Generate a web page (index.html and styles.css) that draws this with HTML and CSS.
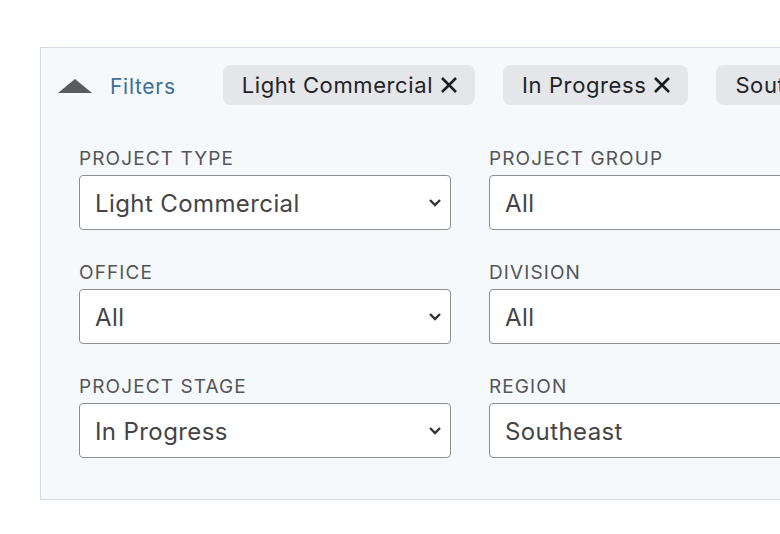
FILE: index.html
```html
<!DOCTYPE html>
<html lang="en">
<head>
<meta charset="utf-8">
<title>Filters</title>
<link rel="stylesheet" href="styles.css">
</head>
<body>
<div class="panel">
  <div class="header">
    <button class="toggle" type="button">
      <svg class="caret" width="34" height="14" viewBox="0 0 34 14"><polygon points="17,0 34,14 0,14" fill="#5b5b5c"/></svg>
      <span class="toggle-label">Filters</span>
    </button>
    <div class="chips">
      <span class="chip">Light Commercial <svg class="x" width="18" height="18" viewBox="0 0 18 18"><path d="M2 2 L16 16 M16 2 L2 16" stroke="#1c1c1e" stroke-width="2.6" stroke-linecap="butt"/></svg></span>
      <span class="chip">In Progress <svg class="x" width="18" height="18" viewBox="0 0 18 18"><path d="M2 2 L16 16 M16 2 L2 16" stroke="#1c1c1e" stroke-width="2.6" stroke-linecap="butt"/></svg></span>
      <span class="chip">Southeast <svg class="x" width="18" height="18" viewBox="0 0 18 18"><path d="M2 2 L16 16 M16 2 L2 16" stroke="#1c1c1e" stroke-width="2.6" stroke-linecap="butt"/></svg></span>
    </div>
  </div>
  <div class="grid">
    <div class="field">
      <div class="label">PROJECT TYPE</div>
      <div class="select"><span>Light Commercial</span><svg class="chev" width="14" height="9" viewBox="0 0 14 9"><path d="M2 2 L7 7 L12 2" fill="none" stroke="#333" stroke-width="2.4"/></svg></div>
    </div>
    <div class="field">
      <div class="label">PROJECT GROUP</div>
      <div class="select"><span>All</span><svg class="chev" width="14" height="9" viewBox="0 0 14 9"><path d="M2 2 L7 7 L12 2" fill="none" stroke="#333" stroke-width="2.4"/></svg></div>
    </div>
    <div class="field">
      <div class="label">OFFICE</div>
      <div class="select"><span>All</span><svg class="chev" width="14" height="9" viewBox="0 0 14 9"><path d="M2 2 L7 7 L12 2" fill="none" stroke="#333" stroke-width="2.4"/></svg></div>
    </div>
    <div class="field">
      <div class="label">DIVISION</div>
      <div class="select"><span>All</span><svg class="chev" width="14" height="9" viewBox="0 0 14 9"><path d="M2 2 L7 7 L12 2" fill="none" stroke="#333" stroke-width="2.4"/></svg></div>
    </div>
    <div class="field">
      <div class="label">PROJECT STAGE</div>
      <div class="select"><span>In Progress</span><svg class="chev" width="14" height="9" viewBox="0 0 14 9"><path d="M2 2 L7 7 L12 2" fill="none" stroke="#333" stroke-width="2.4"/></svg></div>
    </div>
    <div class="field">
      <div class="label">REGION</div>
      <div class="select"><span>Southeast</span><svg class="chev" width="14" height="9" viewBox="0 0 14 9"><path d="M2 2 L7 7 L12 2" fill="none" stroke="#333" stroke-width="2.4"/></svg></div>
    </div>
  </div>
</div>
</body>
</html>
```
FILE: styles.css
```css
html, body {
  margin: 0;
  padding: 0;
  background: #ffffff;
  overflow: hidden;
}
body {
  font-family: Inter, "Noto Sans", "Liberation Sans", sans-serif;
  width: 780px;
  height: 534px;
}
.panel {
  margin: 47px 0 0 40px;
  width: 860px;
  box-sizing: border-box;
  border: 1px solid #d4dce4;
  background: #f5f9fc;
  padding: 17px 0 41px 17px;
}
.header {
  display: flex;
  align-items: center;
  height: 40px;
}
.toggle {
  display: flex;
  align-items: center;
  gap: 18px;
  background: none;
  border: 0;
  padding: 0;
  font: inherit;
  cursor: pointer;
}
.caret { display: block; margin-top: 2px; }
.toggle-label {
  font-size: 21px;
  letter-spacing: 0.7px;
  color: #3b6e96;
  line-height: 26px;
  margin-top: 3px;
}
.chips {
  display: flex;
  gap: 28px;
  margin-left: 47px;
  white-space: nowrap;
}
.chip {
  display: inline-flex;
  align-items: center;
  gap: 7px;
  height: 40px;
  box-sizing: border-box;
  padding: 0 17px 0 19px;
  border-radius: 8px;
  background: #e4e6e9;
  color: #222226;
  font-size: 22px;
  letter-spacing: 0.6px;
}
.x { display: block; }
.grid {
  display: grid;
  grid-template-columns: 372px 372px;
  column-gap: 38px;
  row-gap: 31px;
  padding: 42px 0 0 21px;
}
.label {
  font-size: 19px;
  line-height: 24px;
  color: #555558;
  margin-bottom: 4px;
  letter-spacing: 1.1px;
}
.select {
  display: flex;
  align-items: center;
  justify-content: space-between;
  height: 55px;
  box-sizing: border-box;
  border: 1px solid #8e8e90;
  border-radius: 4px;
  background: #ffffff;
  padding: 2px 8px 0 15px;
  font-size: 24px;
  letter-spacing: 0.4px;
  color: #444446;
}
.chev { display: block; margin-top: -2px; }
```
